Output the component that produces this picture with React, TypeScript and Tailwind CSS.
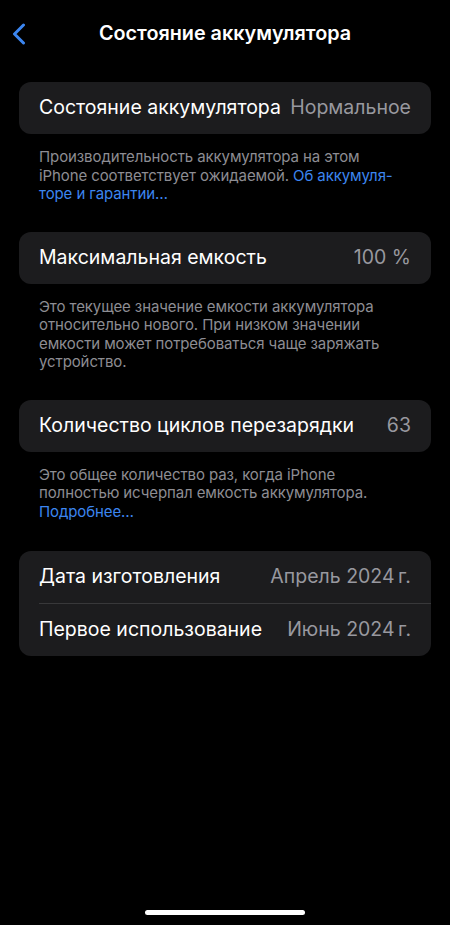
import React from 'react';

const font = { fontFamily: 'Inter, "Noto Sans", sans-serif' };

interface RowProps {
  label: string;
  value: string;
}

const Row: React.FC<RowProps> = ({ label, value }) => (
  <div className="flex items-center justify-between h-[52px] pr-5 text-[19.5px]">
    <span className="text-white whitespace-nowrap">{label}</span>
    <span className="text-[#98989f] whitespace-nowrap">{value}</span>
  </div>
);

const Footer: React.FC<{ children: React.ReactNode }> = ({ children }) => (
  <p className="px-[39px] pt-[14px] text-[15px] leading-[18.5px] text-[#8d8d93] tracking-[-0.1px]">
    {children}
  </p>
);

export default function App() {
  return (
    <div className="w-[450px] h-[925px] bg-black flex flex-col relative overflow-hidden" style={font}>
      {/* Nav bar */}
      <div className="relative h-[68px] flex items-center justify-center">
        <button className="absolute left-[8px] top-[19px] p-1">
          <svg width="14" height="22" viewBox="0 0 14 22" fill="none">
            <path d="M11.5 2 L2.5 11 L11.5 20" stroke="#3c86f0" strokeWidth="3" strokeLinecap="round" strokeLinejoin="round" />
          </svg>
        </button>
        <h1 className="text-white text-[19.8px] font-semibold">Состояние аккумулятора</h1>
      </div>

      <div className="mt-[14px] mx-[19px] rounded-[12px] bg-[#1c1c1e] pl-5">
        <Row label="Состояние аккумулятора" value="Нормальное" />
      </div>
      <Footer>
        Производительность аккумулятора на этом iPhone соответствует ожидаемой.{' '}
        <span className="text-[#3c86f0]">Об аккумуля-<br />торе и гарантии…</span>
      </Footer>

      <div className="mt-[28px] mx-[19px] rounded-[12px] bg-[#1c1c1e] pl-5">
        <Row label="Максимальная емкость" value="100 %" />
      </div>
      <Footer>
        Это текущее значение емкости аккумулятора относительно нового. При низком значении емкости может потребоваться чаще заряжать устройство.
      </Footer>

      <div className="mt-[28px] mx-[19px] rounded-[12px] bg-[#1c1c1e] pl-5">
        <Row label="Количество циклов перезарядки" value="63" />
      </div>
      <Footer>
        Это общее количество раз, когда iPhone полностью исчерпал емкость аккумулятора.{' '}
        <span className="text-[#3c86f0]">Подробнее…</span>
      </Footer>

      <div className="mt-[30px] mx-[19px] rounded-[12px] bg-[#1c1c1e] pl-5">
        <Row label="Дата изготовления" value={'Апрель 2024\u2009г.'} />
        <div className="h-px bg-[#38383a]" />
        <Row label="Первое использование" value={'Июнь 2024\u2009г.'} />
      </div>

      {/* Home indicator */}
      <div className="absolute bottom-[10px] left-1/2 -translate-x-1/2 w-[160px] h-[5px] rounded-full bg-white" />
    </div>
  );
}
